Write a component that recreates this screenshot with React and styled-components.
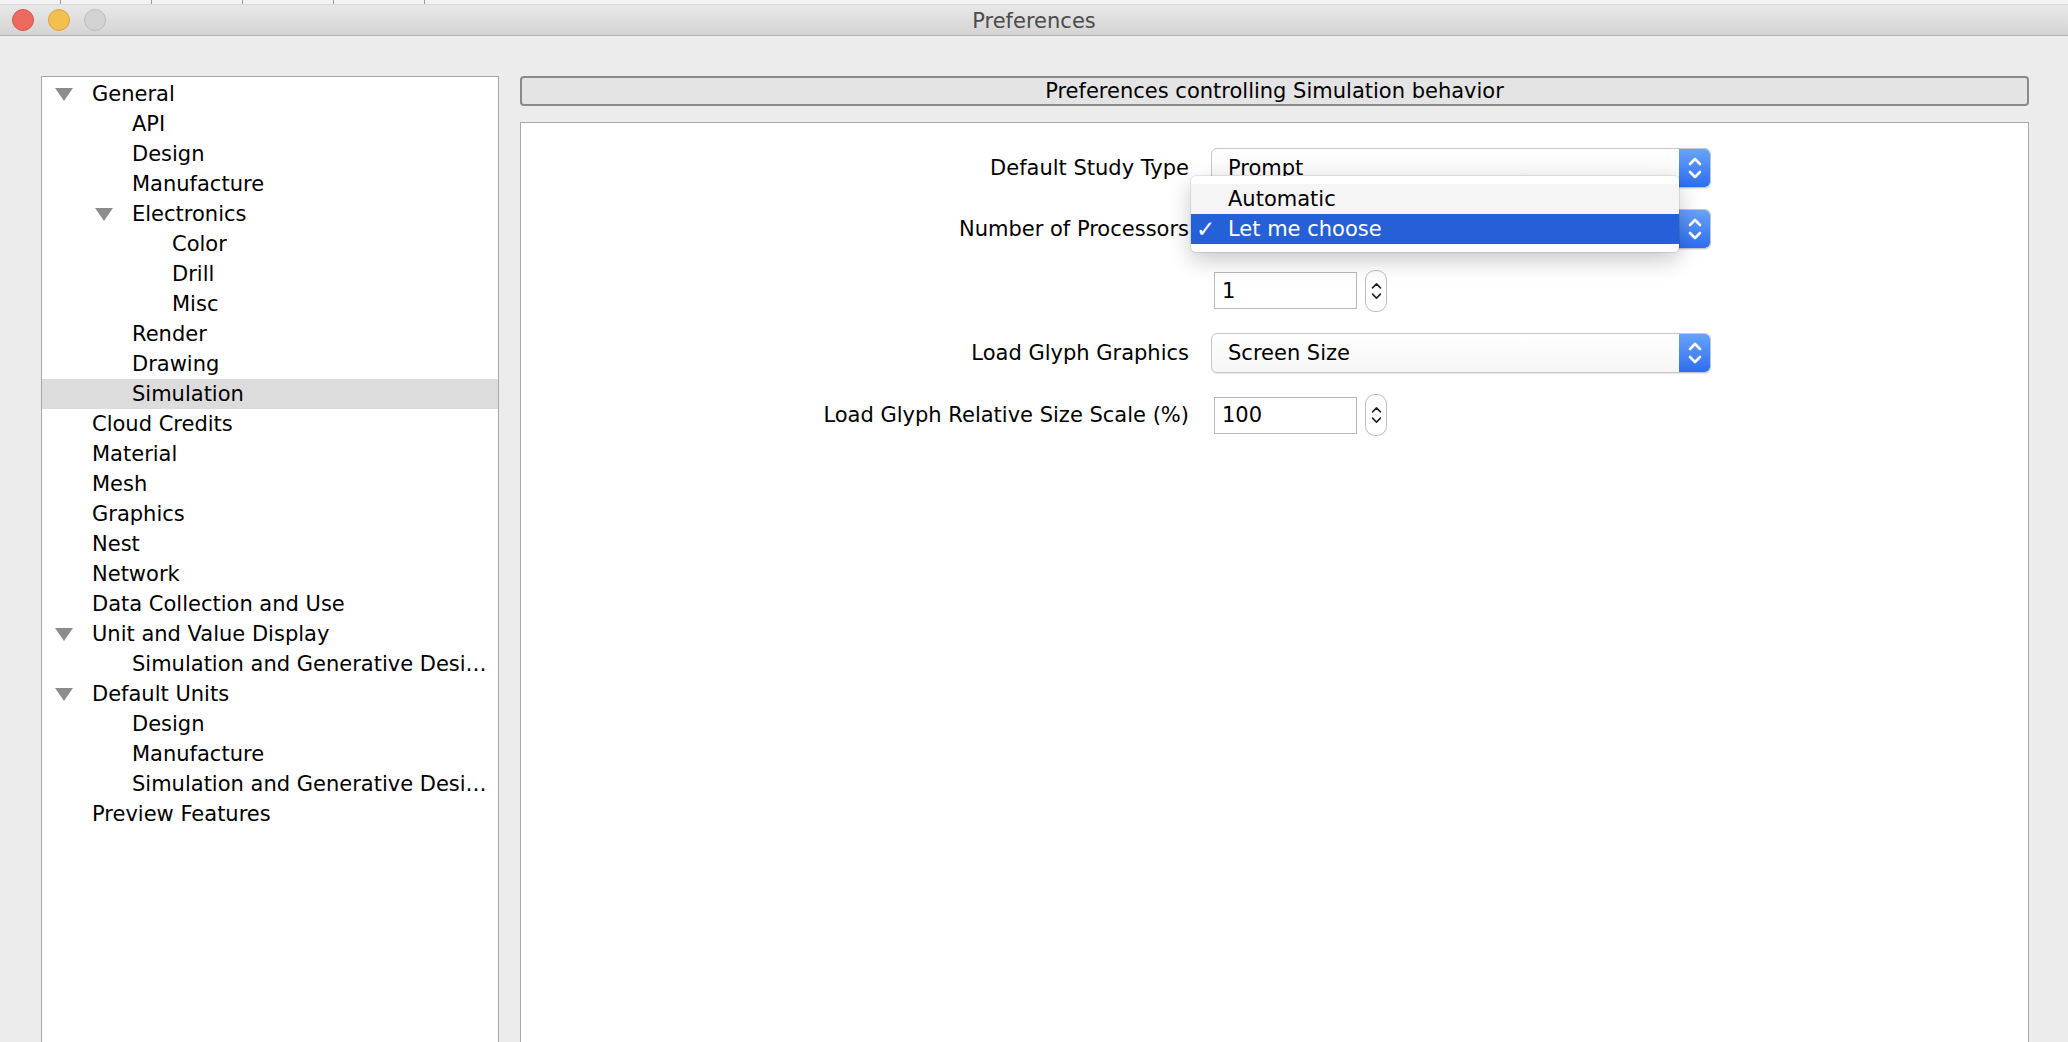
import React from 'react';
import styled, { createGlobalStyle } from 'styled-components';

const Global = createGlobalStyle`
  html, body { margin: 0; padding: 0; }
  body {
    background: #ececec;
    font-family: "DejaVu Sans", "Liberation Sans", sans-serif;
    overflow: hidden;
    color: #111;
  }
  #root { height: 1042px; }
`;

const Screen = styled.div`
  width: 2068px;
  height: 1042px;
  display: flex;
  flex-direction: column;
  overflow: hidden;
  background: #ececec;
`;

const BehindStrip = styled.div`
  height: 4px;
  flex: none;
  background: #f2f2f2;
  display: flex;
  gap: 90px;
  padding-left: 60px;
`;

const BehindMark = styled.span`
  width: 1px;
  height: 4px;
  background: #9a9a9a;
`;

const TitleBar = styled.div`
  height: 30px;
  flex: none;
  display: flex;
  align-items: center;
  position: relative;
  background: linear-gradient(#e8e8e8, #d4d4d4);
  border-bottom: 1px solid #b1b1b1;
  border-top: 1px solid #d9d9d9;
`;

const Lights = styled.div`
  display: flex;
  gap: 14px;
  padding-left: 12px;
`;

const Light = styled.span`
  width: 20px;
  height: 20px;
  border-radius: 50%;
  background: ${p => p.$c};
  border: 1px solid ${p => p.$b};
`;

const Title = styled.div`
  position: absolute;
  left: 0;
  right: 0;
  padding-top: 1px;
  text-align: center;
  font-size: 21px;
  color: #4b4b4b;
  pointer-events: none;
`;

const Main = styled.div`
  flex: 1;
  display: flex;
  gap: 21px;
  padding: 40px 39px 0 41px;
  min-height: 0;
`;

const Tree = styled.div`
  width: 456px;
  flex: none;
  background: #fff;
  border: 1px solid #a8a8a8;
  border-bottom: none;
  padding-top: 2px;
  font-size: 21px;
`;

const Row = styled.div`
  height: 30px;
  display: flex;
  align-items: center;
  padding-left: ${p => 13 + p.$level * 40}px;
  background: ${p => (p.$selected ? '#dcdcdc' : 'transparent')};
  color: #000;
  white-space: nowrap;
  overflow: hidden;
`;

const Toggle = styled.span`
  width: 37px;
  flex: none;
  display: flex;
  align-items: center;
`;

const Triangle = styled.span`
  width: 0;
  height: 0;
  border-left: 9px solid transparent;
  border-right: 9px solid transparent;
  border-top: 13px solid #8c8c8c;
`;

const RowLabel = styled.span`
  line-height: 30px;
  overflow: hidden;
`;

const Right = styled.div`
  flex: 1;
  display: flex;
  flex-direction: column;
  gap: 16px;
  min-width: 0;
`;

const Header = styled.div`
  height: 26px;
  flex: none;
  border: 2px solid #8a8a8a;
  border-radius: 4px;
  background: #e4e4e4;
  display: flex;
  align-items: center;
  justify-content: center;
  font-size: 21px;
  color: #000;
`;

const Panel = styled.div`
  flex: 1;
  background: #fff;
  border: 1px solid #a9a9a9;
  border-bottom: none;
  padding-top: 25px;
`;

const Form = styled.div`
  display: grid;
  grid-template-columns: 668px 500px;
  grid-template-rows: 40px 40px 41px 41px 42px;
  column-gap: 22px;
  row-gap: 21px;
  align-items: center;
`;

const Label = styled.div`
  text-align: right;
  font-size: 21px;
  color: #000;
  white-space: nowrap;
`;

const ComboWrap = styled.div`
  position: relative;
  height: 40px;
`;

const Combo = styled.div`
  height: 38px;
  display: flex;
  align-items: center;
  border: 1px solid #c6c6c6;
  border-radius: 6px;
  background: linear-gradient(#ffffff, #f6f6f6);
  box-shadow: 0 1px 1px rgba(0, 0, 0, 0.1);
  overflow: hidden;
`;

const ComboText = styled.span`
  flex: 1;
  padding-left: 16px;
  font-size: 21px;
  color: #000;
`;

const ComboButton = styled.span`
  width: 31px;
  align-self: stretch;
  display: flex;
  align-items: center;
  justify-content: center;
  background: linear-gradient(#66a3f8, #2d6ef1);
  border-radius: 0 5px 5px 0;
`;

const SpinRow = styled.div`
  display: flex;
  align-items: center;
  gap: 8px;
  padding-left: 3px;
`;

const Field = styled.div`
  width: 134px;
  height: 35px;
  border: 1px solid #b9b9b9;
  background: #fff;
  display: flex;
  align-items: center;
  padding-left: 7px;
  font-size: 21px;
  color: #000;
`;

const Spinner = styled.div`
  width: 20px;
  height: 40px;
  border: 1px solid #bdbdbd;
  border-radius: 10px;
  background: #fff;
  display: flex;
  align-items: center;
  justify-content: center;
`;

const Popup = styled.div`
  position: absolute;
  left: -20px;
  top: -33px;
  width: 488px;
  padding: 8px 0;
  background: #fff;
  border-radius: 5px;
  box-shadow: 0 0 0 1px rgba(0, 0, 0, 0.08), 0 8px 22px rgba(0, 0, 0, 0.22);
  z-index: 10;
`;

const MenuItem = styled.div`
  height: 30px;
  display: flex;
  align-items: center;
  font-size: 21px;
  background: ${p => (p.$selected ? '#2560d8' : '#f5f5f5')};
  color: ${p => (p.$selected ? '#fff' : '#000')};
`;

const Check = styled.span`
  width: 37px;
  flex: none;
  padding-left: 5px;
  box-sizing: border-box;
  font-size: 23px;
`;

const UpDown = ({ color = '#fff', w = 14, h = 26, sw = 2.6 }) => (
  <svg width={w} height={h} viewBox="0 0 14 26" fill="none" stroke={color} strokeWidth={sw} strokeLinecap="round" strokeLinejoin="round">
    <polyline points="2,9 7,4 12,9" />
    <polyline points="2,17 7,22 12,17" />
  </svg>
);

const tree = [
  { t: 'General', l: 0, open: true },
  { t: 'API', l: 1 },
  { t: 'Design', l: 1 },
  { t: 'Manufacture', l: 1 },
  { t: 'Electronics', l: 1, open: true },
  { t: 'Color', l: 2 },
  { t: 'Drill', l: 2 },
  { t: 'Misc', l: 2 },
  { t: 'Render', l: 1 },
  { t: 'Drawing', l: 1 },
  { t: 'Simulation', l: 1, sel: true },
  { t: 'Cloud Credits', l: 0 },
  { t: 'Material', l: 0 },
  { t: 'Mesh', l: 0 },
  { t: 'Graphics', l: 0 },
  { t: 'Nest', l: 0 },
  { t: 'Network', l: 0 },
  { t: 'Data Collection and Use', l: 0 },
  { t: 'Unit and Value Display', l: 0, open: true },
  { t: 'Simulation and Generative Desi…', l: 1 },
  { t: 'Default Units', l: 0, open: true },
  { t: 'Design', l: 1 },
  { t: 'Manufacture', l: 1 },
  { t: 'Simulation and Generative Desi…', l: 1 },
  { t: 'Preview Features', l: 0 },
];

const ComboBox = ({ value, children }) => (
  <ComboWrap>
    <Combo>
      <ComboText>{value}</ComboText>
      <ComboButton>
        <UpDown />
      </ComboButton>
    </Combo>
    {children}
  </ComboWrap>
);

const SpinField = ({ value }) => (
  <SpinRow>
    <Field>{value}</Field>
    <Spinner>
      <UpDown color="#222" w={11} h={24} sw={2} />
    </Spinner>
  </SpinRow>
);

export default function App() {
  return (
    <Screen>
      <Global />
      <BehindStrip>
        <BehindMark />
        <BehindMark />
        <BehindMark />
        <BehindMark />
        <BehindMark />
      </BehindStrip>
      <TitleBar>
        <Lights>
          <Light $c="#ee6a5f" $b="#d55447" />
          <Light $c="#f5bf4f" $b="#d9a33f" />
          <Light $c="#d3d3d3" $b="#bdbdbd" />
        </Lights>
        <Title>Preferences</Title>
      </TitleBar>
      <Main>
        <Tree>
          {tree.map((n, i) => (
            <Row key={i} $level={n.l} $selected={n.sel}>
              <Toggle>{n.open && <Triangle />}</Toggle>
              <RowLabel>{n.t}</RowLabel>
            </Row>
          ))}
        </Tree>
        <Right>
          <Header>Preferences controlling Simulation behavior</Header>
          <Panel>
            <Form>
              <Label>Default Study Type</Label>
              <ComboBox value="Prompt" />
              <Label>Number of Processors</Label>
              <ComboBox value="Let me choose">
                <Popup>
                  <MenuItem>
                    <Check />
                    Automatic
                  </MenuItem>
                  <MenuItem $selected>
                    <Check>✓</Check>
                    Let me choose
                  </MenuItem>
                </Popup>
              </ComboBox>
              <span />
              <SpinField value="1" />
              <Label>Load Glyph Graphics</Label>
              <ComboBox value="Screen Size" />
              <Label>Load Glyph Relative Size Scale (%)</Label>
              <SpinField value="100" />
            </Form>
          </Panel>
        </Right>
      </Main>
    </Screen>
  );
}
